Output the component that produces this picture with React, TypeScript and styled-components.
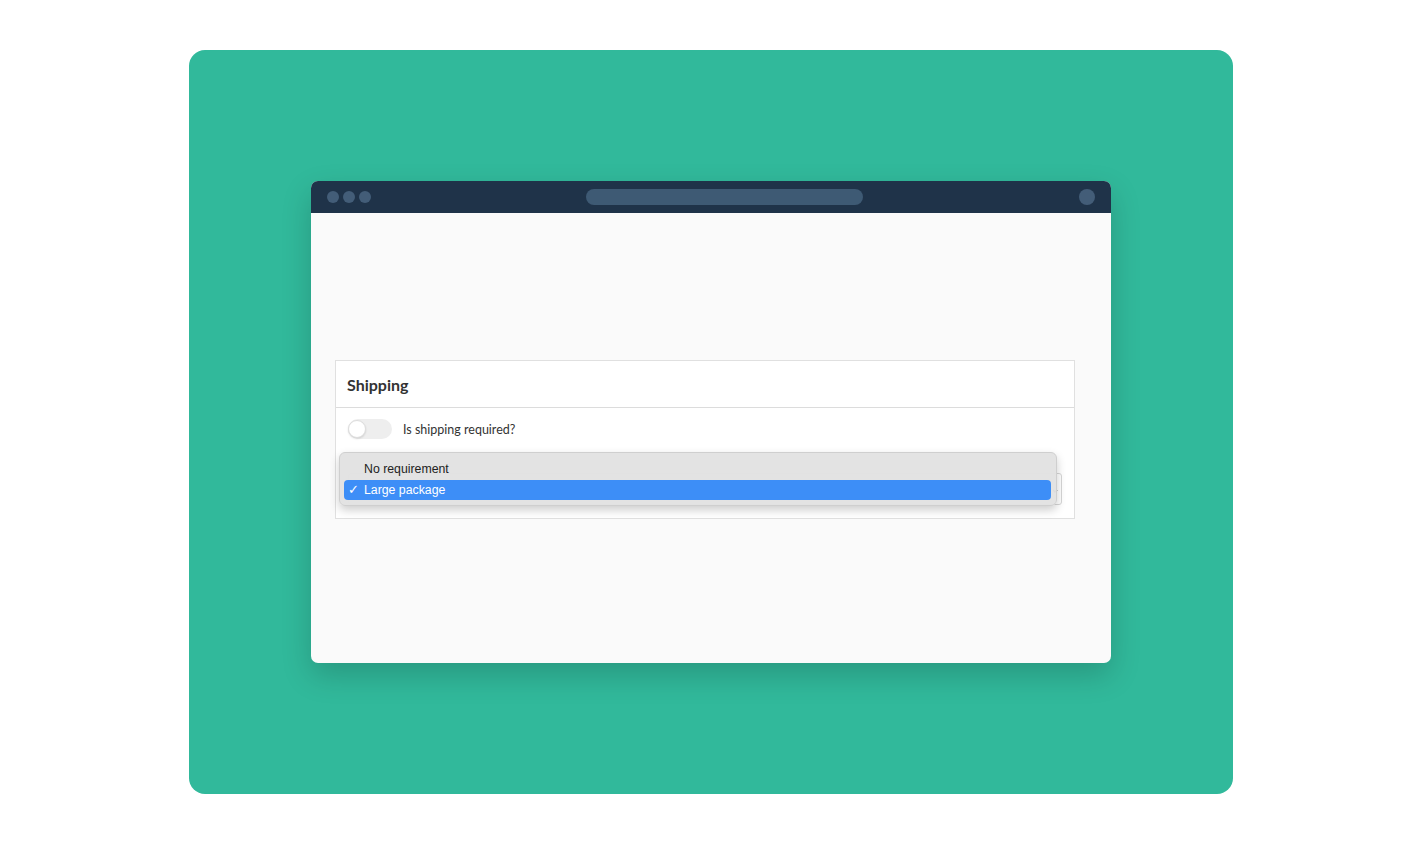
import styled, { createGlobalStyle } from "styled-components";

const GlobalStyle = createGlobalStyle`
  html, body {
    margin: 0;
    padding: 0;
    background: #ffffff;
  }
  body {
    font-family: "Lato", "Liberation Sans", sans-serif;
  }
`;

const Page = styled.div`
  display: flex;
  justify-content: center;
  padding-top: 50px;
  height: 844px;
  box-sizing: border-box;
`;

const Stage = styled.div`
  width: 1044px;
  height: 744px;
  border-radius: 16px;
  background: #31b99b;
  display: flex;
  align-items: center;
  justify-content: center;
`;

const Window = styled.div`
  width: 800px;
  height: 482px;
  border-radius: 7px;
  overflow: hidden;
  background: #fafafa;
  box-shadow: 0 12px 30px rgba(0, 0, 0, 0.18);
  display: flex;
  flex-direction: column;
`;

const TitleBar = styled.div`
  height: 32px;
  flex-shrink: 0;
  background: #1f3349;
  display: flex;
  align-items: center;
  padding: 0 16px;
`;

const Dots = styled.div`
  display: flex;
  gap: 4px;
`;

const Dot = styled.span<{ $size?: number }>`
  width: ${({ $size }) => $size ?? 12}px;
  height: ${({ $size }) => $size ?? 12}px;
  border-radius: 50%;
  background: #435d78;
`;

const UrlBar = styled.div`
  width: 277px;
  height: 16px;
  border-radius: 8px;
  background: #3e5a74;
  margin-left: 215px;
`;

const Spacer = styled.div`
  flex: 1;
`;

const Content = styled.div`
  flex: 1;
  padding: 147px 0 0 24px;
`;

const Card = styled.div`
  width: 740px;
  box-sizing: border-box;
  background: #ffffff;
  border: 1px solid #e0e0e0;
`;

const CardHeader = styled.div`
  height: 46px;
  display: flex;
  align-items: center;
  padding: 0 11px;
  border-bottom: 1px solid #dcdcdc;
  font-size: 16px;
  font-weight: 700;
  color: #333333;
`;

const CardBody = styled.div`
  padding: 11px 12px 13px;
`;

const ToggleRow = styled.div`
  display: flex;
  align-items: center;
  gap: 12px;
  height: 20px;
`;

const Toggle = styled.span`
  width: 44px;
  height: 20px;
  border-radius: 10px;
  background: #eeeeee;
  position: relative;
  display: inline-block;

  &::after {
    content: "";
    position: absolute;
    left: 0;
    top: 1px;
    width: 18px;
    height: 18px;
    border-radius: 50%;
    background: #ffffff;
    border: 1px solid #dddddd;
    box-sizing: border-box;
    box-shadow: 0 1px 2px rgba(0, 0, 0, 0.12);
  }
`;

const ToggleLabel = styled.span`
  font-size: 12.5px;
  color: #333333;
  margin-left: -1px;
`;

const SelectWrap = styled.div`
  position: relative;
  margin-top: 34px;
`;

const SelectBox = styled.div`
  height: 32px;
  box-sizing: border-box;
  border: 1px solid #d6d6d6;
  border-radius: 3px;
  background: #ffffff;
  display: flex;
  align-items: center;
  justify-content: flex-end;
  padding-right: 3px;
`;

const Popup = styled.div`
  position: absolute;
  left: -9px;
  top: -21px;
  width: 718px;
  box-sizing: border-box;
  padding: 6px 5px 5px 4px;
  background: rgba(226, 226, 226, 0.97);
  border: 1px solid #cfcfcf;
  border-radius: 6px;
  box-shadow: 0 4px 10px rgba(0, 0, 0, 0.2);
  font-family: "Liberation Sans", "Inter", sans-serif;
  font-size: 12.3px;
`;

const Option = styled.div<{ $selected?: boolean }>`
  height: 20px;
  display: flex;
  align-items: center;
  border-radius: 4px;
  padding-left: 20px;
  position: relative;
  color: ${({ $selected }) => ($selected ? "#ffffff" : "#222222")};
  background: ${({ $selected }) => ($selected ? "#3d8ef7" : "transparent")};
  & + & {
    margin-top: 1px;
  }
`;

const Check = styled.span`
  position: absolute;
  left: 4px;
  top: 2px;
  font-size: 13px;
  font-weight: 700;
  font-family: "DejaVu Sans", sans-serif;
`;

export default function App() {
  return (
    <>
      <GlobalStyle />
      <Page>
        <Stage>
          <Window>
            <TitleBar>
              <Dots>
                <Dot />
                <Dot />
                <Dot />
              </Dots>
              <UrlBar />
              <Spacer />
              <Dot $size={16} />
            </TitleBar>
            <Content>
              <Card>
                <CardHeader>Shipping</CardHeader>
                <CardBody>
                  <ToggleRow>
                    <Toggle />
                    <ToggleLabel>Is shipping required?</ToggleLabel>
                  </ToggleRow>
                  <SelectWrap>
                    <SelectBox>
                      <svg width="6" height="8" viewBox="0 0 6 8">
                        <path d="M1 5l2 2 2-2" fill="none" stroke="#222" strokeWidth="1.4" />
                      </svg>
                    </SelectBox>
                    <Popup>
                      <Option>No requirement</Option>
                      <Option $selected>
                        <Check>✓</Check>
                        Large package
                      </Option>
                    </Popup>
                  </SelectWrap>
                </CardBody>
              </Card>
            </Content>
          </Window>
        </Stage>
      </Page>
    </>
  );
}
